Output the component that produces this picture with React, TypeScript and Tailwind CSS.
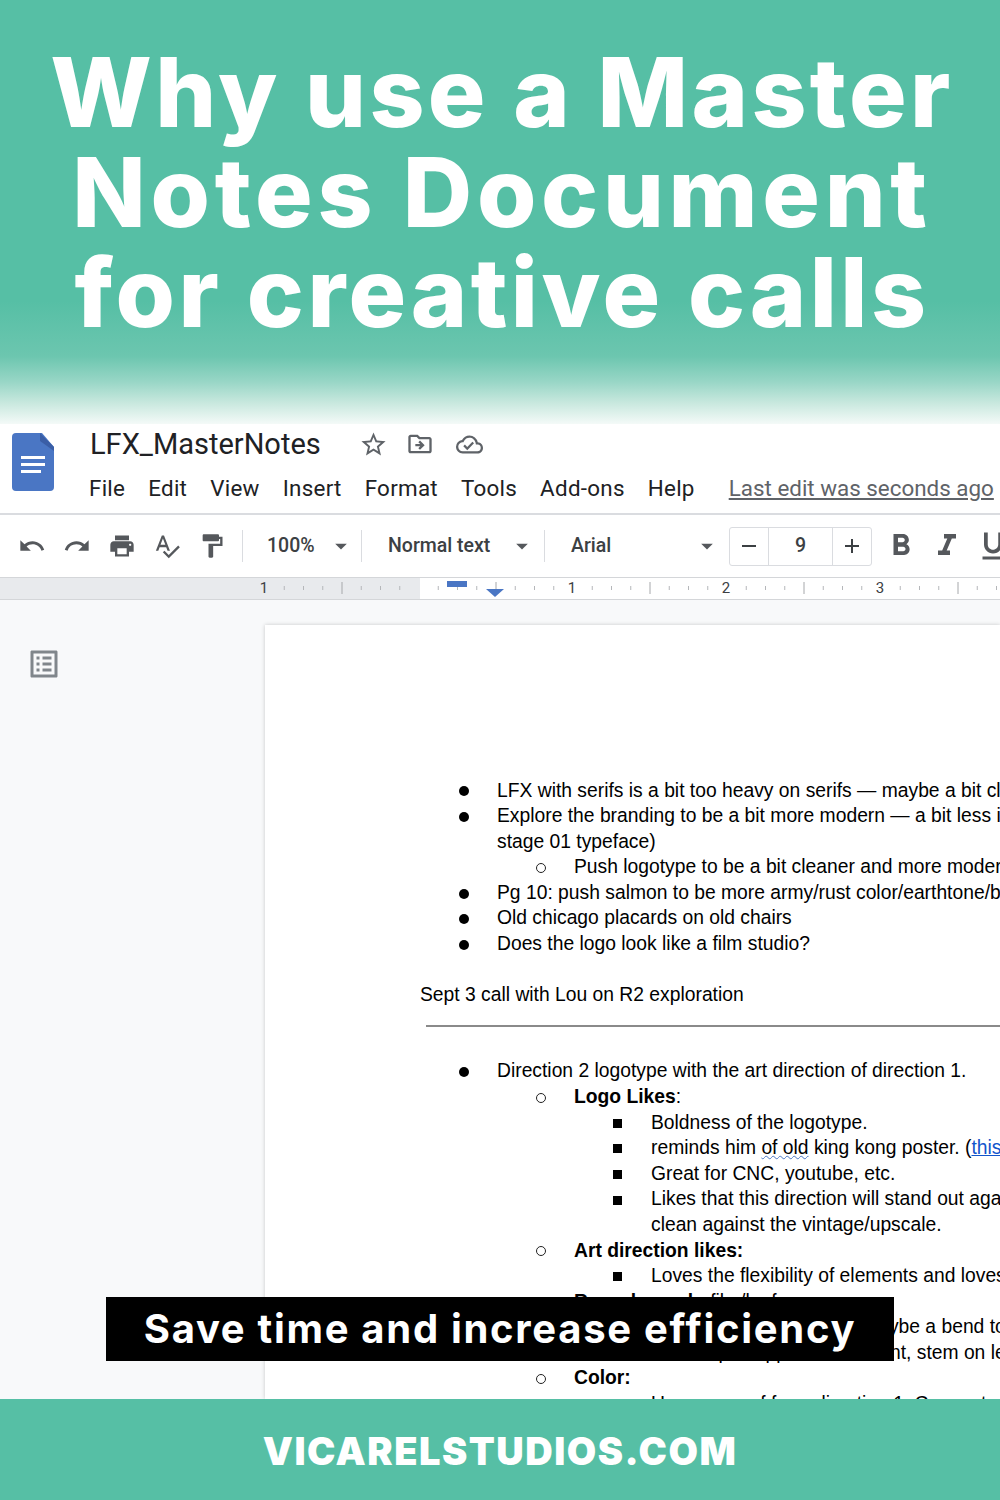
import {
  MdUndo,
  MdRedo,
  MdPrint,
  MdSpellcheck,
  MdFormatPaint,
  MdArrowDropDown,
  MdAdd,
  MdRemove,
  MdFormatBold,
  MdFormatItalic,
  MdFormatUnderlined,
  MdStarBorder,
  MdOutlineDriveFileMove,
  MdOutlineCloudDone,
  MdOutlineListAlt,
} from "react-icons/md";
import type { ReactNode } from "react";

const menu = ["File", "Edit", "View", "Insert", "Format", "Tools", "Add-ons", "Help"];

function DocIcon() {
  return (
    <svg width="42" height="58" viewBox="0 0 42 58" className="mt-[4px] shrink-0">
      <path d="M4 0h26l12 14v40a4 4 0 0 1-4 4H4a4 4 0 0 1-4-4V4a4 4 0 0 1 4-4z" fill="#4a76c4" />
      <path d="M28 0l14 14v4L28 8z" fill="#3a5ea6" />
      <rect x="9" y="23" width="24" height="3" fill="#fff" />
      <rect x="9" y="30" width="24" height="3" fill="#fff" />
      <rect x="9" y="37" width="20" height="3" fill="#fff" />
    </svg>
  );
}

function Ruler() {
  const xs = Array.from({ length: 50 }, (_, i) => 265 + i * 19.25);
  const labels = [
    { x: 265, t: "1" },
    { x: 573, t: "1" },
    { x: 727, t: "2" },
    { x: 881, t: "3" },
  ];
  return (
    <svg width="1000" height="23" viewBox="0 0 1000 23" className="block shrink-0">
      <rect x="0" y="0" width="420" height="23" fill="#e8eaed" />
      <rect x="420" y="0" width="580" height="23" fill="#ffffff" />
      <line x1="0" y1="0.5" x2="1000" y2="0.5" stroke="#d4d6d9" />
      <line x1="0" y1="22.5" x2="1000" y2="22.5" stroke="#d4d6d9" />
      {xs.map((x, i) => {
        const isLabel = i % 8 === 0;
        const isHalf = i % 8 === 4;
        if (isLabel) return null;
        return (
          <line
            key={i}
            x1={x}
            x2={x}
            y1={isHalf ? 5 : 9}
            y2={isHalf ? 17 : 13}
            stroke={isHalf ? "#a6a8ab" : "#b5b7ba"}
            strokeWidth="1"
          />
        );
      })}
      {labels.map((l) => (
        <text
          key={l.x}
          x={l.x - 1}
          y="16"
          textAnchor="middle"
          fontSize="15"
          fill="#3c4043"
          fontFamily="Roboto, sans-serif"
        >
          {l.t}
        </text>
      ))}
      <rect x="447" y="4" width="20" height="6" fill="#4a76c4" />
      <path d="M486 12h18l-9 8z" fill="#4a76c4" />
    </svg>
  );
}

function Sep() {
  return <div className="h-[32px] w-px shrink-0 bg-[#dadce0]" />;
}

function Bullet({ level }: { level: number }) {
  if (level === 1) return <span className="mt-[2px] block h-[10px] w-[10px] rounded-full bg-black" />;
  if (level === 2)
    return <span className="mt-[2px] block h-[10px] w-[10px] rounded-full border border-[#222]" />;
  return <span className="mt-[2px] block h-[9px] w-[9px] bg-black" />;
}

function Row({
  level,
  bullet = true,
  children,
}: {
  level: number;
  bullet?: boolean;
  children: ReactNode;
}) {
  const pad = level === 1 ? "pl-[39px]" : level === 2 ? "pl-[116px]" : "pl-[193px]";
  return (
    <div className={`flex items-center whitespace-nowrap ${pad}`}>
      <div className="flex w-[38px] shrink-0 items-center">{bullet && <Bullet level={level} />}</div>
      <div>{children}</div>
    </div>
  );
}

export default function App() {
  return (
    <div className="relative flex h-[1500px] w-[1000px] flex-col overflow-hidden bg-white font-['Liberation_Sans',sans-serif]">
      <header className="h-[424px] shrink-0 bg-[linear-gradient(to_bottom,#56bfa5_71%,#6cc6af_84%,#98d6c6_90%,#c8e8de_95%,#f4faf8_100%)] pl-[4px] pt-[42px] text-center font-['Inter',sans-serif] text-[96px] leading-[100px] font-extrabold whitespace-nowrap text-white">
        <h1>
          <span className="block tracking-[3.4px]">Why use a Master</span>
          <span className="block tracking-[4.7px]">Notes Document</span>
          <span className="block tracking-[3.5px]">for creative calls</span>
        </h1>
      </header>

      <div className="flex h-[91px] shrink-0 border-b-2 border-[#dadce0] pl-[12px] pt-[5px]">
        <DocIcon />
        <div className="ml-[36px] flex-1">
          <div className="flex h-[30px] items-center">
            <span className="w-[269px] font-['Roboto',sans-serif] text-[29px] leading-none text-[#202124]">
              LFX_MasterNotes
            </span>
            <div className="flex items-center gap-[18px] text-[#5f6368]">
              <MdStarBorder size={29} />
              <MdOutlineDriveFileMove size={28} />
              <MdOutlineCloudDone size={27} className="ml-[4px]" />
            </div>
          </div>
          <div className="-ml-px mt-[14px] flex items-center gap-[23px] whitespace-nowrap font-['Roboto',sans-serif] text-[22.4px] leading-[30px] tracking-[0.27px] text-[#202124]">
            {menu.map((m) => (
              <span key={m}>{m}</span>
            ))}
            <span className="ml-[11px] text-[22.4px] tracking-normal text-[#5f6368] underline">
              Last edit was seconds ago
            </span>
          </div>
        </div>
      </div>

      <div className="flex h-[62px] shrink-0 items-center overflow-hidden pl-[18px] font-['Roboto',sans-serif] text-[19.5px] font-medium whitespace-nowrap text-[#3c4043]">
        <div className="flex w-[224px] shrink-0 items-center gap-[17px] text-[#55585c]">
          <MdUndo size={28} />
          <MdRedo size={28} />
          <MdPrint size={28} />
          <MdSpellcheck size={28} />
          <MdFormatPaint size={28} />
        </div>
        <Sep />
        <span className="ml-[24px] w-[60px] shrink-0">100%</span>
        <MdArrowDropDown size={28} className="shrink-0 text-[#55585c]" />
        <div className="w-[6px] shrink-0" />
        <Sep />
        <span className="ml-[26px] w-[120px] shrink-0">Normal text</span>
        <MdArrowDropDown size={28} className="shrink-0 text-[#55585c]" />
        <div className="w-[8px] shrink-0" />
        <Sep />
        <span className="ml-[26px] w-[122px] shrink-0">Arial</span>
        <MdArrowDropDown size={28} className="shrink-0 text-[#55585c]" />
        <div className="ml-[8px] flex h-[39px] w-[143px] shrink-0 items-center rounded-[3px] border border-[#dadce0]">
          <div className="flex h-full w-[39px] items-center justify-center border-r border-[#dadce0]">
            <MdRemove size={24} />
          </div>
          <div className="flex-1 text-center">9</div>
          <div className="flex h-full w-[39px] items-center justify-center border-l border-[#dadce0]">
            <MdAdd size={24} />
          </div>
        </div>
        <div className="ml-[11px] flex shrink-0 items-center gap-[10px] text-[#55585c]">
          <MdFormatBold size={36} />
          <MdFormatItalic size={36} />
          <MdFormatUnderlined size={36} />
        </div>
      </div>

      <Ruler />

      <main className="flex min-h-0 flex-1 overflow-hidden bg-[#f8f9fa]">
        <aside className="w-[265px] shrink-0 pl-[26px] pt-[46px] text-[#80868b]">
          <MdOutlineListAlt size={36} />
        </aside>
        <section className="mt-[25px] flex-1 overflow-hidden bg-white pl-[155px] pt-[152.5px] text-[19.3px] leading-[25.6px] text-black shadow-[0_0_4px_rgba(0,0,0,0.2)]">
          <Row level={1}>LFX with serifs is a bit too heavy on serifs — maybe a bit cleaner</Row>
          <Row level={1}>Explore the branding to be a bit more modern — a bit less industrial</Row>
          <Row level={1} bullet={false}>stage 01 typeface)</Row>
          <Row level={2}>Push logotype to be a bit cleaner and more modern</Row>
          <Row level={1}>Pg 10: push salmon to be more army/rust color/earthtone/brown</Row>
          <Row level={1}>Old chicago placards on old chairs</Row>
          <Row level={1}>Does the logo look like a film studio?</Row>
          <div className="h-[25.6px]" />
          <p>Sept 3 call with Lou on R2 exploration</p>
          <div className="mb-[31.5px] ml-[6px] mt-[17px] h-[2px] bg-[#8a8a8a]" />
          <Row level={1}>Direction 2 logotype with the art direction of direction 1.</Row>
          <Row level={2}>
            <b>Logo Likes</b>:
          </Row>
          <Row level={3}>Boldness of the logotype.</Row>
          <Row level={3}>
            reminds him{" "}
            <span className="underline decoration-[#4a76c4] decoration-wavy decoration-1">of old</span> king
            kong poster. (<span className="text-[#1155cc] underline">this</span>
          </Row>
          <Row level={3}>Great for CNC, youtube, etc.</Row>
          <Row level={3}>Likes that this direction will stand out against</Row>
          <Row level={3} bullet={false}>clean against the vintage/upscale.</Row>
          <Row level={2}>
            <b>Art direction likes:</b>
          </Row>
          <Row level={3}>Loves the flexibility of elements and loves</Row>
          <Row level={2}>
            <b>Recycle mark:</b> film/leaf
          </Row>
          <Row level={3}>Can push the leaf more, maybe a bend to</Row>
          <Row level={3}>Film strip wrapped at the front, stem on left</Row>
          <Row level={2}>
            <b>Color:</b>
          </Row>
          <Row level={3}>Uses more of from direction 1. Concept</Row>
        </section>
      </main>

      <footer className="flex h-[101px] shrink-0 items-center justify-center bg-[#56bfa5] pt-[4px] font-['Inter',sans-serif] text-[38px] font-black tracking-[1.5px] text-white">
        VICARELSTUDIOS.COM
      </footer>

      <div className="absolute left-[106px] top-[1297px] flex h-[64px] w-[788px] items-center justify-center bg-black font-['Inter',sans-serif] text-[40px] font-bold tracking-[1.7px] text-white">
        Save time and increase efficiency
      </div>
    </div>
  );
}
